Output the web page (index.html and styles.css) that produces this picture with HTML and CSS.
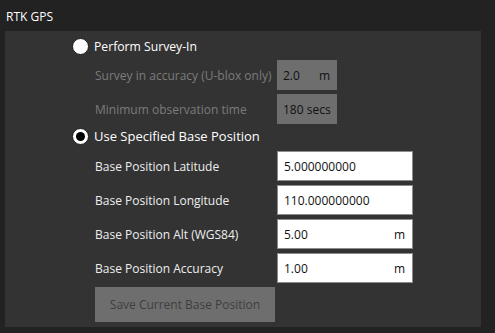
FILE: index.html
```html
<!DOCTYPE html>
<html>
<head>
<meta charset="utf-8">
<link rel="stylesheet" href="styles.css">
</head>
<body>
<div class="title">RTK GPS</div>
<div class="panel">
  <div class="content">
    <div class="radio-row">
      <span class="radio"></span>
      <span class="radio-label">Perform Survey-In</span>
    </div>
    <div class="row row-first">
      <span class="label dim">Survey in accuracy (U-blox only)</span>
      <span class="field small"><span>2.0</span><span>m</span></span>
    </div>
    <div class="row">
      <span class="label dim">Minimum observation time</span>
      <span class="field small"><span>180 secs</span></span>
    </div>
    <div class="radio-row radio-row2">
      <span class="radio checked"></span>
      <span class="radio-label strong">Use Specified Base Position</span>
    </div>
    <div class="row row-inputs">
      <span class="label">Base Position Latitude</span>
      <span class="field input"><span>5.000000000</span></span>
    </div>
    <div class="row">
      <span class="label">Base Position Longitude</span>
      <span class="field input"><span>110.000000000</span></span>
    </div>
    <div class="row">
      <span class="label">Base Position Alt (WGS84)</span>
      <span class="field input"><span>5.00</span><span>m</span></span>
    </div>
    <div class="row">
      <span class="label">Base Position Accuracy</span>
      <span class="field input"><span>1.00</span><span>m</span></span>
    </div>
    <div class="btn-row">
      <span class="button">Save Current Base Position</span>
    </div>
  </div>
</div>
</body>
</html>
```

FILE: styles.css
```css
html, body {
  margin: 0;
  padding: 0;
}
body {
  background: #222222;
  font-family: "Open Sans", "DejaVu Sans", sans-serif;
  font-size: 12px;
  color: #ffffff;
  width: 495px;
  height: 333px;
  overflow: hidden;
  white-space: nowrap;
}
.title {
  height: 23px;
  padding: 8px 0 0 6px;
  line-height: 18px;
  color: #ffffff;
}
.panel {
  margin-left: 5px;
  width: 476px;
  height: 286px;
  padding: 5px 0;
  background: #333333;
}
.content {
  width: 341px;
  margin-left: 67px;
  display: flex;
  flex-direction: column;
}
.radio-row {
  height: 20px;
  display: flex;
  align-items: center;
}
.radio-row2 {
  margin-top: 2px;
}
.radio {
  width: 15px;
  height: 15px;
  border-radius: 50%;
  background: #ffffff;
  border: 1px solid #1a1a1a;
  box-sizing: content-box;
  position: relative;
  flex: none;
}
.radio.checked::after {
  content: "";
  position: absolute;
  left: 3px;
  top: 3px;
  width: 9px;
  height: 9px;
  border-radius: 50%;
  background: #000000;
}
.radio-label {
  margin-left: 5px;
  color: #ffffff;
  font-size: 12.2px;
}
.radio-label.strong {
  font-size: 13px;
}
.row {
  margin-top: 4px;
  display: flex;
  align-items: center;
  height: 30px;
}
.row-inputs {
  margin-top: 5px;
}
.label {
  width: 182px;
  margin-left: 23px;
  color: #eeeeee;
  flex: none;
}
.label.dim {
  color: #7b7b7b;
}
.field {
  height: 30px;
  box-sizing: border-box;
  display: flex;
  align-items: center;
  justify-content: space-between;
  padding: 0 7px 0 6px;
  color: #111111;
  flex: none;
}
.field.small {
  width: 60px;
  background: #6e6e6e;
}
.field.input {
  width: 136px;
  background: #ffffff;
  border: 1px solid #8c8c8c;
}
.btn-row {
  margin-top: 4px;
  margin-left: 23px;
  display: flex;
}
.button {
  width: 180px;
  height: 35px;
  display: flex;
  align-items: center;
  justify-content: center;
  background: #6e6e6e;
  color: #3e3e3e;
}
```
